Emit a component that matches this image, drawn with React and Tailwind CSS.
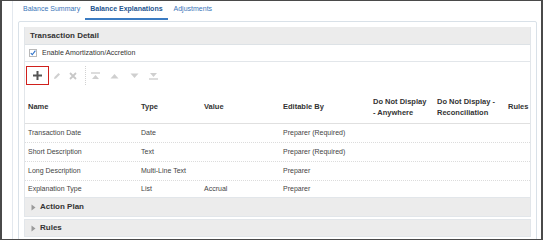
import React from 'react'

const font = { fontFamily: '"Liberation Sans", Arial, sans-serif' }

const rows = [
  { name: 'Transaction Date', type: 'Date', value: '', editable: 'Preparer (Required)' },
  { name: 'Short Description', type: 'Text', value: '', editable: 'Preparer (Required)' },
  { name: 'Long Description', type: 'Multi-Line Text', value: '', editable: 'Preparer' },
  { name: 'Explanation Type', type: 'List', value: 'Accrual', editable: 'Preparer' },
]

const cols = 'grid grid-cols-[113px_63px_79px_90px_64px_71px_1fr] pl-[3px]'

function Section({ title, h }) {
  return (
    <div className={`${h} flex items-center bg-[#ececec] border border-[#e2e6ea] pl-[6px]`}>
      <svg width="5" height="7" viewBox="0 0 5 7" className="mr-[4px]">
        <path d="M0.5 0.5 L4.5 3.5 L0.5 6.5 Z" fill="#9a9a9a" />
      </svg>
      <span className="text-[8px] font-bold text-[#333]">{title}</span>
    </div>
  )
}

export default function App() {
  return (
    <div
      className="w-[543px] h-[240px] bg-white border-t border-b border-l-2 border-r-2 border-[#4a4a4a] overflow-hidden"
      style={font}
    >
      <div className="ml-[10px] h-full border-l border-[#e3e8ee]">
        {/* Tabs */}
        <div className="flex pl-[5px] h-[19px] text-[7px]">
          <div className="px-[5px] flex items-center pb-[2px] text-[#3a74b8]">Balance Summary</div>
          <div className="px-[5px] flex items-center border-b-2 border-[#3a7bc2] font-bold text-[#25558f]">
            Balance Explanations
          </div>
          <div className="px-[6px] flex items-center pb-[2px] text-[#3a74b8]">Adjustments</div>
        </div>

        {/* Panel */}
        <div className="ml-[5px] mt-[1px] w-[519px] h-[230px] border border-[#d9e1e8] rounded-[2px] p-[5px]">
          <div className="border-l border-r border-[#e2e6ea]">
            <div className="h-[18px] flex items-center bg-[#ececec] pl-[5px] border-b border-[#dde2e6]">
              <span className="text-[8px] font-bold text-[#333]">Transaction Detail</span>
            </div>

            {/* Checkbox row */}
            <div className="h-[17px] flex items-center pl-[4px] border-b border-[#e2e6ea]">
              <span className="w-[8px] h-[8px] border border-[#b8b8b8] bg-white flex items-center justify-center">
                <svg width="8" height="8" viewBox="0 0 8 8">
                  <path d="M1 4 L3 6.3 L7.2 0.8" stroke="#2a6fc9" strokeWidth="1.5" fill="none" />
                </svg>
              </span>
              <span className="ml-[5px] text-[7px] text-[#333]">Enable Amortization/Accretion</span>
            </div>

            {/* Toolbar */}
            <div className="flex items-center pl-[1px] pt-[4px] pb-[5px]">
              <div className="w-[23px] h-[19px] border border-[#d0201c] flex items-center justify-center">
                <svg width="9" height="9" viewBox="0 0 9 9">
                  <path d="M4.5 0 V9 M0 4.5 H9" stroke="#555" strokeWidth="2" />
                </svg>
              </div>
              <div className="w-[16px] flex justify-center">
                <svg width="8" height="8" viewBox="0 0 8 8">
                  <path d="M1 7 L1.5 5 L5.5 1 L7 2.5 L3 6.5 Z" fill="#cfcfcf" />
                </svg>
              </div>
              <div className="w-[16px] flex justify-center">
                <svg width="8" height="8" viewBox="0 0 8 8">
                  <path d="M1 1 L7 7 M7 1 L1 7" stroke="#c8c8c8" strokeWidth="1.8" />
                </svg>
              </div>
              <div className="ml-[4px] w-px h-[19px] border-l border-dotted border-[#d2d2d2]" />
              <div className="w-[18px] flex justify-center">
                <svg width="9" height="8" viewBox="0 0 9 8">
                  <path d="M0 1 H9" stroke="#cfcfcf" strokeWidth="1.4" />
                  <path d="M1 7 L4.5 3 L8 7 Z" fill="#cfcfcf" />
                </svg>
              </div>
              <div className="w-[20px] flex justify-center">
                <svg width="9" height="6" viewBox="0 0 9 6">
                  <path d="M0.5 5.5 L4.5 1 L8.5 5.5 Z" fill="#cfcfcf" />
                </svg>
              </div>
              <div className="w-[20px] flex justify-center">
                <svg width="9" height="6" viewBox="0 0 9 6">
                  <path d="M0.5 0.5 L4.5 5 L8.5 0.5 Z" fill="#cfcfcf" />
                </svg>
              </div>
              <div className="w-[18px] flex justify-center">
                <svg width="9" height="8" viewBox="0 0 9 8">
                  <path d="M1 1 L4.5 5 L8 1 Z" fill="#cfcfcf" />
                  <path d="M0 7 H9" stroke="#cfcfcf" strokeWidth="1.4" />
                </svg>
              </div>
            </div>

            {/* Table header */}
            <div className={`${cols} h-[34px] items-center border-b border-[#e0e0e0] text-[7.5px] font-bold text-[#333] leading-[11px]`}>
              <div>Name</div>
              <div>Type</div>
              <div>Value</div>
              <div>Editable By</div>
              <div>Do Not Display<br />- Anywhere</div>
              <div>Do Not Display -<br />Reconciliation</div>
              <div>Rules</div>
            </div>

            {/* Rows */}
            {rows.map((r, i) => (
              <div
                key={r.name}
                className={`${cols} items-center text-[7px] text-[#444] ${
                  i < 3 ? 'h-[19px] border-b border-dotted border-[#dcdcdc]' : 'h-[16px]'
                }`}
              >
                <div>{r.name}</div>
                <div>{r.type}</div>
                <div>{r.value}</div>
                <div>{r.editable}</div>
                <div />
                <div />
                <div />
              </div>
            ))}
          </div>

          <Section title="Action Plan" h="h-[20px]" />
          <div className="h-[2px]" />
          <Section title="Rules" h="h-[18px]" />
        </div>
      </div>
    </div>
  )
}
